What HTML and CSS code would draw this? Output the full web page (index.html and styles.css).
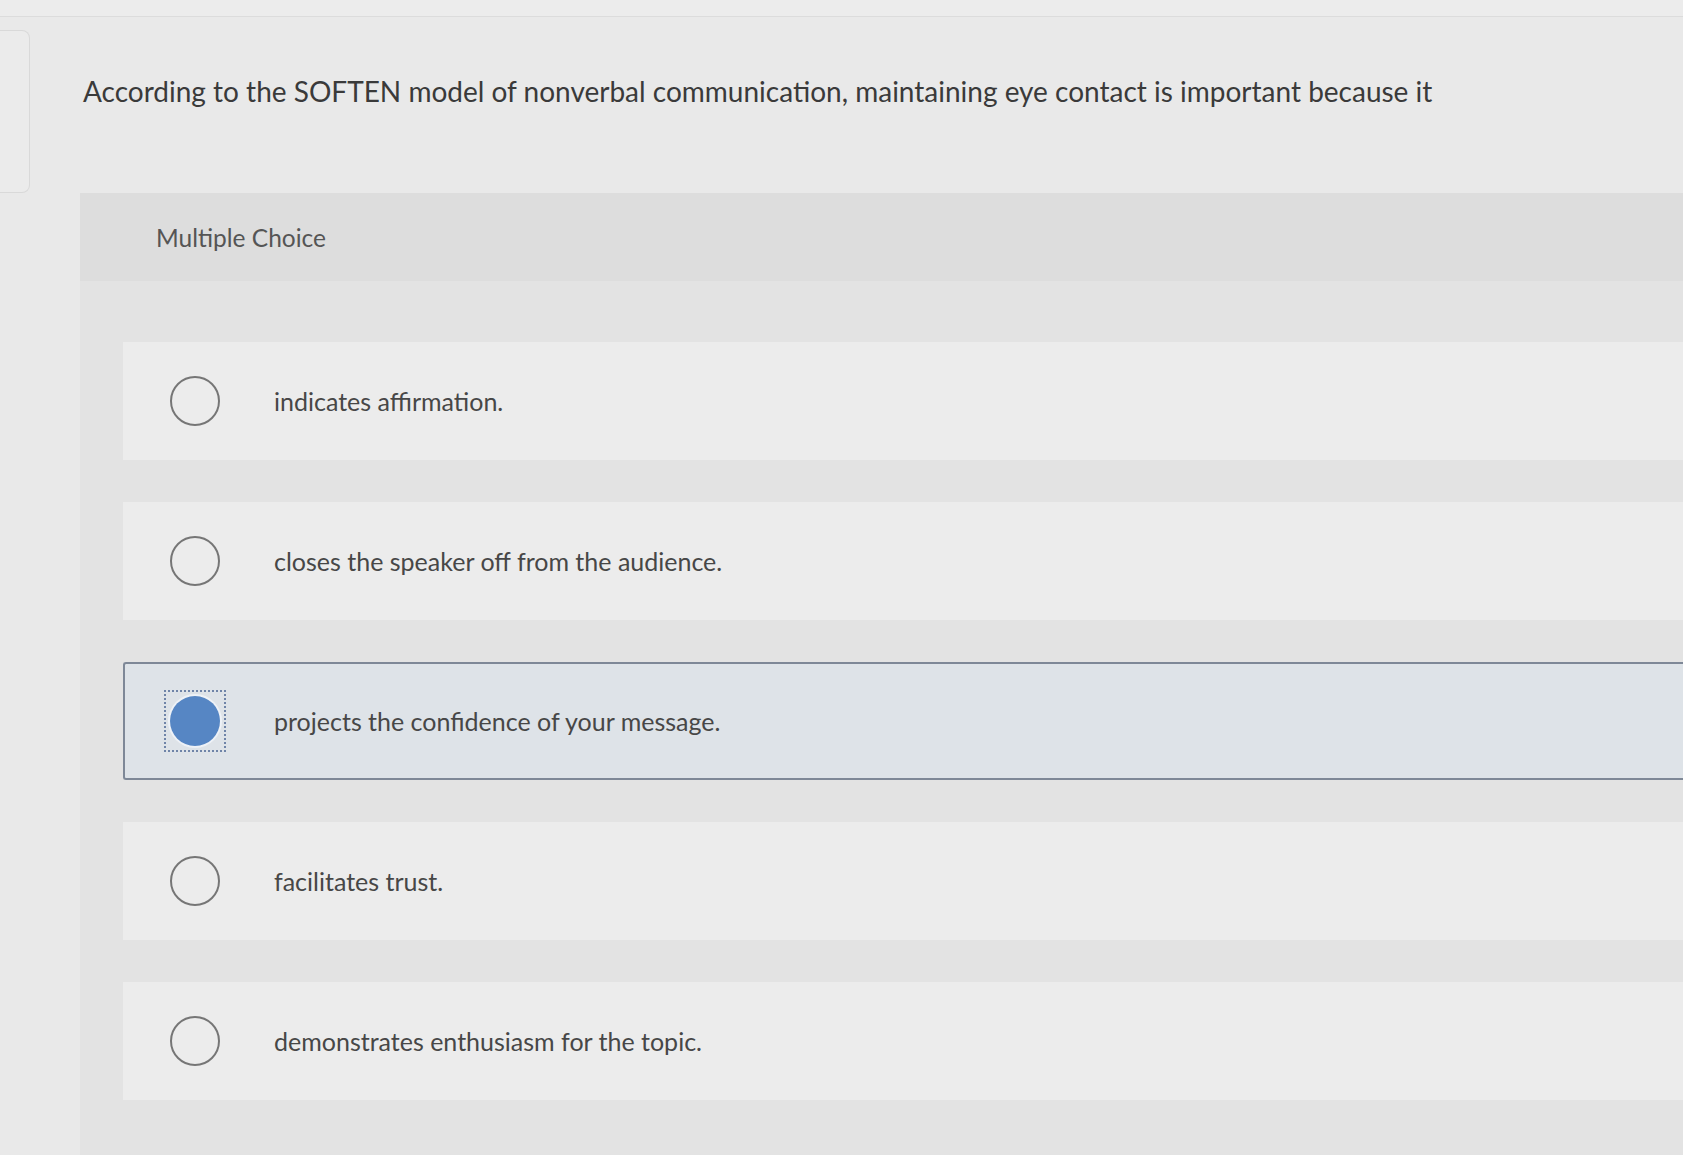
FILE: index.html
```html
<!DOCTYPE html>
<html lang="en">
<head>
    <meta charset="UTF-8">
    <meta name="viewport" content="width=device-width, initial-scale=1.0">
    <link rel="stylesheet" href="styles.css">
    <title>Multiple Choice</title>
</head>
<body>

    <div class="topbar"></div>

    <div class="head">
        <div class="side-tab"></div>
        <p class="question">According to the SOFTEN model of nonverbal communication, maintaining eye contact is important because it</p>
    </div>

    <div class="card">
        <div class="card-title">Multiple Choice</div>

        <div class="choices">
            <label class="choice">
                <span class="radio"></span>
                <span class="choice-text">indicates affirmation.</span>
            </label>

            <label class="choice">
                <span class="radio"></span>
                <span class="choice-text">closes the speaker off from the audience.</span>
            </label>

            <label class="choice selected">
                <span class="radio checked"></span>
                <span class="choice-text">projects the confidence of your message.</span>
            </label>

            <label class="choice">
                <span class="radio"></span>
                <span class="choice-text">facilitates trust.</span>
            </label>

            <label class="choice">
                <span class="radio"></span>
                <span class="choice-text">demonstrates enthusiasm for the topic.</span>
            </label>
        </div>
    </div>

</body>
</html>
```

FILE: styles.css
```css
*{
    box-sizing: border-box;
}

body{
    margin: 0;
    background-color: #e9e9e9;
    font-family: Lato, "Open Sans", sans-serif;
    overflow: hidden;
}

.topbar{
    height: 17px;
    border-bottom: 1px solid #dcdcdc;
    background-color: #ececec;
}

.head{
    display: flex;
    height: 176px;
}

.side-tab{
    width: 30px;
    height: 163px;
    margin-top: 13px;
    border: 1px solid #d9d9d9;
    border-left: none;
    border-radius: 0 8px 8px 0;
    background-color: #ebebeb;
}

.question{
    margin: 0;
    padding-top: 56px;
    padding-left: 53px;
    font-size: 28px;
    line-height: 36px;
    color: #3a3a3a;
}

.card{
    margin-left: 80px;
    padding-bottom: 60px;
    background-color: #e3e3e3;
}

.card-title{
    height: 88px;
    padding-left: 76px;
    padding-top: 29px;
    font-size: 24.5px;
    line-height: 32px;
    color: #555555;
    background-color: #dddddd;
}

.choices{
    display: flex;
    flex-direction: column;
    gap: 42px;
    padding-top: 61px;
    padding-left: 43px;
}

.choice{
    display: flex;
    align-items: center;
    height: 118px;
    padding-left: 47px;
    background-color: #ececec;
}

.choice.selected{
    padding-left: 45px;
    border: 2px solid #7e8897;
    border-right: none;
    border-radius: 3px 0 0 3px;
    background-color: #dee3e8;
}

.radio{
    position: relative;
    flex: none;
    width: 50px;
    height: 50px;
    margin-right: 54px;
    border: 2px solid #767676;
    border-radius: 50%;
}

.radio.checked{
    border: none;
    background-color: #5686c4;
    box-shadow: 0 0 0 2px #eef2f7;
}

/* focus ring is a square, not the circle */
.radio.checked::after{
    content: "";
    position: absolute;
    top: -6px;
    left: -6px;
    right: -6px;
    bottom: -6px;
    border: 2px dotted #6f84a8;
}

.choice-text{
    font-size: 25px;
    line-height: 32px;
    color: #474747;
}
```
